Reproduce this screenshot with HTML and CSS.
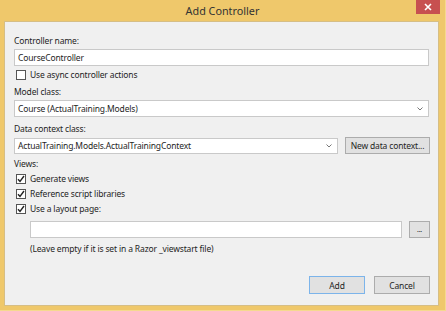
FILE: index.html
```html
<!DOCTYPE html>
<html>
<head>
<meta charset="utf-8">
<link rel="stylesheet" href="styles.css">
</head>
<body>
<div class="window">
  <div class="titlebar">
    <span class="title">Add Controller</span>
    <div class="close"><svg width="8" height="8" viewBox="0 0 8 8"><path d="M1 1L7 7M7 1L1 7" stroke="#fff" stroke-width="1.6"/></svg></div>
  </div>
  <div class="client">
    <div class="label">Controller name:</div>
    <div class="textbox full">CourseController</div>
    <div class="check-row first"><span class="box"></span><span>Use async controller actions</span></div>
    <div class="label gap">Model class:</div>
    <div class="textbox full combo"><span>Course (ActualTraining.Models)</span><svg class="arrow" width="6" height="4" viewBox="0 0 6 4"><path d="M0.5 0.5L3 3L5.5 0.5" fill="none" stroke="#777" stroke-width="1"/></svg></div>
    <div class="label gap2">Data context class:</div>
    <div class="ctx-row">
      <div class="textbox combo ctx"><span>ActualTraining.Models.ActualTrainingContext</span><svg class="arrow" width="6" height="4" viewBox="0 0 6 4"><path d="M0.5 0.5L3 3L5.5 0.5" fill="none" stroke="#777" stroke-width="1"/></svg></div>
      <div class="button newctx">New data context...</div>
    </div>
    <div class="label views">Views:</div>
    <div class="check-row"><span class="box checked"><svg width="8" height="8" viewBox="0 0 8 8"><path d="M1 4.2L3 6.5L7 1" fill="none" stroke="#222" stroke-width="1.4"/></svg></span><span>Generate views</span></div>
    <div class="check-row"><span class="box checked"><svg width="8" height="8" viewBox="0 0 8 8"><path d="M1 4.2L3 6.5L7 1" fill="none" stroke="#222" stroke-width="1.4"/></svg></span><span>Reference script libraries</span></div>
    <div class="check-row"><span class="box checked"><svg width="8" height="8" viewBox="0 0 8 8"><path d="M1 4.2L3 6.5L7 1" fill="none" stroke="#222" stroke-width="1.4"/></svg></span><span>Use a layout page:</span></div>
    <div class="layout-row">
      <div class="textbox layout"></div>
      <div class="button browse">...</div>
    </div>
    <div class="hint">(Leave empty if it is set in a Razor _viewstart file)</div>
    <div class="actions">
      <div class="button add">Add</div>
      <div class="button cancel">Cancel</div>
    </div>
  </div>
</div>
</body>
</html>
```

FILE: styles.css
```css
* { box-sizing: border-box; }
html, body { margin: 0; padding: 0; }
body {
  width: 446px;
  height: 311px;
  overflow: hidden;
  font-family: "Segoe UI", "Noto Sans", sans-serif;
  font-size: 8.5px;
  letter-spacing: -0.15px;
  color: #1e1e1e;
}
.window {
  width: 446px;
  height: 311px;
  background: #efc86b;
  padding: 0 6px 4px 4px;
  display: flex;
  flex-direction: column;
  border-right: 1px solid #f5d98f;
  border-bottom: 1px solid #f5d98f;
}
.titlebar {
  height: 21px;
  flex: none;
  display: flex;
  align-items: center;
  justify-content: center;
  position: relative;
  padding-left: 2px;
}
.title {
  font-size: 10.8px;
  color: #333;
  letter-spacing: 0;
}
.close {
  position: absolute;
  right: -1px;
  top: 0;
  width: 24px;
  height: 14px;
  background: #c75050;
  display: flex;
  align-items: center;
  justify-content: center;
}
.client {
  flex: 1;
  background: #f0f0f0;
  border: 1px solid #d6be85;
  padding: 12px 8px 11px 9px;
  display: flex;
  flex-direction: column;
}
.label {
  line-height: 14px;
  height: 14px;
}
.textbox {
  background: #fff;
  border: 1px solid #c9c9c9;
  height: 17px;
  line-height: 15px;
  padding-left: 3px;
  margin-top: 1px;
  margin-right: 1px;
  white-space: nowrap;
}
.combo {
  display: flex;
  align-items: center;
  justify-content: space-between;
  padding-right: 5px;
}
.arrow { flex: none; }
.check-row {
  display: flex;
  align-items: center;
  height: 15px;
  line-height: 15px;
  flex: none;
}
.check-row.first { margin-top: 1px; }
.box {
  width: 10px;
  height: 10px;
  border: 1px solid #555;
  background: #fff;
  margin-left: 2px;
  margin-right: 4px;
  display: flex;
  align-items: center;
  justify-content: center;
  flex: none;
}
.gap { margin-top: 3px; }
.gap2 { margin-top: 5px; }
.ctx-row {
  display: flex;
  align-items: center;
  gap: 7px;
  margin-top: 1px;
}
.ctx { flex: 1; margin-top: 0; height: 16px; line-height: 14px; margin-right: 0; }
.button {
  background: #e1e1e1;
  border: 1px solid #acacac;
  display: flex;
  align-items: center;
  justify-content: center;
  white-space: nowrap;
}
.newctx { width: 85px; height: 17px; }
.views { margin-top: 3px; }
.layout-row {
  display: flex;
  gap: 7px;
  margin-top: 5px;
  padding-left: 16px;
}
.layout { flex: 1; margin-top: 0; margin-right: 0; }
.browse { width: 21px; height: 17px; font-size: 7px; }
.hint {
  margin-top: 4px;
  padding-left: 16px;
  line-height: 14px;
}
.actions {
  margin-top: auto;
  display: flex;
  justify-content: flex-end;
  gap: 9px;
}
.actions .button { width: 56px; height: 18px; }
.add { border-color: #7cb4ea; }
```
